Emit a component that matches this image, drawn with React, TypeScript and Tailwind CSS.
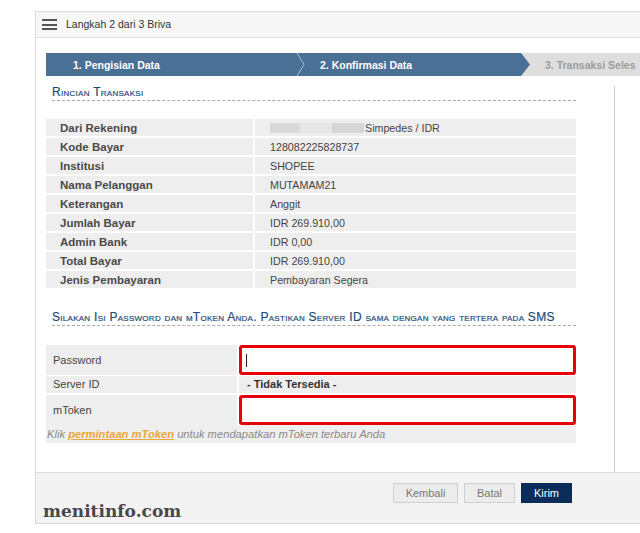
// Briva step 2 of 3: transaction confirmation with password / mToken form.
import React from 'react';

type Row = { label: string; value: string };

const rows: Row[] = [
  { label: 'Dari Rekening', value: 'Simpedes / IDR' },
  { label: 'Kode Bayar', value: '128082225828737' },
  { label: 'Institusi', value: 'SHOPEE' },
  { label: 'Nama Pelanggan', value: 'MUTAMAM21' },
  { label: 'Keterangan', value: 'Anggit' },
  { label: 'Jumlah Bayar', value: 'IDR 269.910,00' },
  { label: 'Admin Bank', value: 'IDR 0,00' },
  { label: 'Total Bayar', value: 'IDR 269.910,00' },
  { label: 'Jenis Pembayaran', value: 'Pembayaran Segera' },
];

function SectionTitle({ children }: { children: React.ReactNode }) {
  return (
    <div className="ml-[6px] h-[15px] w-[524px] whitespace-nowrap border-b border-dashed border-[#a9a9a9] text-[12px] leading-[13px] tracking-[0.28px] text-[#1f4c79] [font-variant:small-caps] [-webkit-text-stroke:0.2px_#1f4c79]">
      {children}
    </div>
  );
}

function Steps() {
  return (
    <div className="flex h-[23px] text-[10.5px] font-bold leading-[24px]">
      <div className="w-[250px] bg-[#4b7096] pl-[27px] text-white">1. Pengisian Data</div>
      <svg width="10" height="23" viewBox="0 0 10 23" className="shrink-0">
        <rect width="10" height="23" fill="#4b7096" />
        <polyline points="1,0 8,11.5 1,23" fill="none" stroke="#a9bdd1" strokeWidth="1" />
      </svg>
      <div className="w-[215px] bg-[#4b7096] pl-[14px] text-white">2. Konfirmasi Data</div>
      <svg width="10" height="23" viewBox="0 0 10 23" className="shrink-0">
        <rect width="10" height="23" fill="#dedede" />
        <polygon points="0,0 9,11.5 0,23" fill="#4b7096" />
      </svg>
      <div className="flex-1 whitespace-nowrap bg-[#dedede] pl-[14px] text-[#9b9b9b]">3. Transaksi Seles</div>
    </div>
  );
}

export default function App() {
  return (
    <div className="relative h-[533px] w-[640px] overflow-hidden bg-white font-['Liberation_Sans',Arial,sans-serif]">
      <div className="ml-[35px] mt-[11px] flex h-[513px] w-[640px] flex-col border border-[#d9d9d9]">
        {/* header */}
        <div className="flex h-[26px] items-center border-b border-[#e0e0e0] bg-[#f7f7f7] pl-[6px]">
          <div className="flex w-[15px] flex-col gap-[2.5px]">
            <span className="h-[2px] bg-[#555]" />
            <span className="h-[2px] bg-[#555]" />
            <span className="h-[2px] bg-[#555]" />
          </div>
          <span className="ml-[9px] text-[10.5px] text-[#333]">Langkah 2 dari 3 Briva</span>
        </div>

        {/* body */}
        <div className="pl-[10px] pt-[15px]">
          <Steps />
          <div className="mt-[10px] h-[386px] w-[569px] border-r border-[#cccccc]">
            <SectionTitle>Rincian Transaksi</SectionTitle>

            <div className="mt-[18px] flex w-[530px] flex-col gap-[2px]">
              {rows.map((r, i) => (
                <div key={r.label} className="flex h-[17px] gap-[2px] leading-[18px]">
                  <div className="w-[207px] bg-[#efeeee] pl-[14px] text-[11.5px] font-bold text-[#4a4a4a]">{r.label}</div>
                  <div className="flex flex-1 items-center bg-[#efeeee] pl-[15px] text-[10.7px] text-[#444]">
                    {i === 0 && (
                      <div className="mr-[1px] flex h-[10px] w-[94px] blur-[0.6px]">
                        <span className="w-[30px] bg-[#d9d9d9]" />
                        <span className="w-[32px] bg-[#e6e6e6]" />
                        <span className="w-[32px] bg-[#d6d6d6]" />
                      </div>
                    )}
                    {r.value}
                  </div>
                </div>
              ))}
            </div>

            <div className="mt-[23px]">
              <SectionTitle>
                Silakan Isi Password dan mToken Anda. Pastikan Server ID sama dengan yang tertera pada SMS
              </SectionTitle>
            </div>

            <div className="mt-[19px] flex w-[530px] flex-col text-[11px]">
              <div className="flex h-[30px] gap-[2px]">
                <div className="flex w-[191px] items-center bg-[#efeeee] pl-[7px] text-[#444]">Password</div>
                <div className="flex flex-1 items-center rounded-[3px] border-[3px] border-[#e6000a] bg-white pl-[4px]">
                  <span className="h-[13px] w-[1px] bg-[#222]" />
                </div>
              </div>
              <div className="mt-[1px] flex h-[17px] gap-[2px] leading-[17px]">
                <div className="w-[191px] bg-[#efeeee] pl-[7px] text-[#444]">Server ID</div>
                <div className="flex-1 bg-[#efeeee] pl-[8px] font-bold text-[#333]">- Tidak Tersedia -</div>
              </div>
              <div className="mt-[2px] flex h-[30px] gap-[2px]">
                <div className="flex w-[191px] items-center bg-[#efeeee] pl-[7px] text-[#444]">mToken</div>
                <div className="flex-1 rounded-[3px] border-[3px] border-[#e6000a] bg-white" />
              </div>
              <div className="h-[18px] bg-[#f0efef] pl-[1px] text-[11.2px] italic leading-[19px] text-[#8a8a8a]">
                Klik{' '}
                <span className="font-bold text-[#e9a63c] underline">permintaan mToken</span>{' '}
                untuk mendapatkan mToken terbaru Anda
              </div>
            </div>
          </div>
        </div>

        {/* footer */}
        <div className="h-[51px] border-t border-[#dcdcdc] bg-[#f3f3f3] pt-[10px]">
          <div className="flex w-[536px] justify-end gap-[6px] text-[11px]">
            <button type="button" className="h-[20px] w-[65px] border border-[#cfcfcf] bg-[#ececec] text-[#777]">
              Kembali
            </button>
            <button type="button" className="h-[20px] w-[51px] border border-[#cfcfcf] bg-[#ececec] text-[#777]">
              Batal
            </button>
            <button type="button" className="h-[20px] w-[51px] bg-[#0b2d5a] text-white">
              Kirim
            </button>
          </div>
        </div>
      </div>

      {/* watermark */}
      <div className="absolute left-[43px] top-[499px] font-['DejaVu_Serif',serif] text-[17px] font-bold text-[#484848]">
        menitinfo.com
      </div>
    </div>
  );
}
